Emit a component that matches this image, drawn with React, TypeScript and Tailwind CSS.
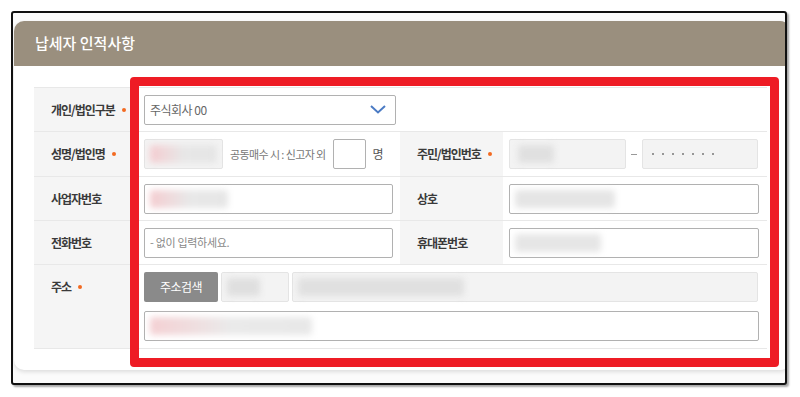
import { ReactNode } from 'react'

const font = { fontFamily: '"Noto Sans CJK KR", "Noto Sans", sans-serif' }

function Label({ children, required, top }: { children: ReactNode; required?: boolean; top?: boolean }) {
  return (
    <div className={`flex bg-[#f5f5f5] pl-[17px] ${top ? 'items-start pt-[13px]' : 'items-center'}`}>
      <span className="inline-flex items-center text-[12px] font-semibold tracking-[-1px] text-[#3a3a3a]">
        {children}
        {required && <span className="ml-[7px] h-[4px] w-[4px] rounded-full bg-[#f26a21]" />}
      </span>
    </div>
  )
}

function Blur({ className }: { className: string }) {
  return <div className={`h-[18px] rounded-[3px] blur-[3px] ${className}`} />
}

function TextBox({ className, children }: { className: string; children?: ReactNode }) {
  return (
    <div className={`flex h-[30px] items-center rounded-[2px] border border-[#b1b1b1] bg-white px-[5px] ${className}`}>
      {children}
    </div>
  )
}

function Disabled({ className, children }: { className: string; children?: ReactNode }) {
  return (
    <div className={`flex h-[30px] items-center rounded-[2px] border border-[#e4e4e4] bg-[#f3f3f3] px-[5px] ${className}`}>
      {children}
    </div>
  )
}

export default function App() {
  return (
    <div className="relative h-[397px] w-[800px] overflow-hidden bg-white pl-[11px] pt-[11px]" style={font}>
      <div className="h-[374px] w-[776px] overflow-hidden rounded-[3px] border-2 border-[#111] bg-[#fbfbfb] pl-px pt-[8px] shadow-[2px_2px_2px_rgba(0,0,0,0.35)]">
        <div className="h-[349px] w-[776px] rounded-[10px] bg-white shadow-[0_2px_4px_rgba(0,0,0,0.12)]">
          <div className="flex h-[45px] items-center rounded-t-[10px] bg-[#9a8f7e] pl-[21px] text-[15px] font-medium text-white">
            납세자 인적사항
          </div>

          <div className="pl-[20px] pt-[21px]">
            <div className="grid w-[733px] grid-cols-[100px_266px_103px_264px] border-t border-[#e8e8e8]">
              {/* row 1 */}
              <div className="col-span-4 grid h-[44px] grid-cols-[100px_1fr] border-b border-[#e8e8e8]">
                <Label required>개인/법인구분</Label>
                <div className="flex items-center pl-[10px]">
                  <div className="flex h-[30px] w-[252px] items-center justify-between rounded-[2px] border border-[#b1b1b1] bg-white pl-[5px] pr-[9px]">
                    <span className="text-[12px] tracking-[-0.5px] text-[#666]">주식회사 00</span>
                    <svg width="16" height="9" viewBox="0 0 16 9" fill="none">
                      <polyline points="1,1 8,7.5 15,1" stroke="#4b7bc4" strokeWidth="2" />
                    </svg>
                  </div>
                </div>
              </div>

              {/* row 2 */}
              <div className="col-span-4 grid h-[45px] grid-cols-[100px_266px_103px_264px] border-b border-[#e8e8e8]">
                <Label required>성명/법인명</Label>
                <div className="flex items-center gap-[7px] pl-[10px]">
                  <Disabled className="w-[79px]">
                    <Blur className="w-[72px] bg-gradient-to-r from-[#f4ccd0] via-[#e7e7e7] to-[#e5e5e5]" />
                  </Disabled>
                  <span className="text-[11px] tracking-[-0.6px] text-[#777]">공동매수 시 : 신고자 외</span>
                  <TextBox className="w-[33px]" />
                  <span className="text-[12px] text-[#555]">명</span>
                </div>
                <Label required>주민/법인번호</Label>
                <div className="flex items-center pl-[6px]">
                  <Disabled className="w-[117px]">
                    <Blur className="ml-[3px] w-[36px] bg-[#e0e0e0]" />
                  </Disabled>
                  <span className="mx-[5px] h-px w-[6px] bg-[#999]" />
                  <Disabled className="w-[116px] pl-[9px]">
                    <div className="flex gap-[8px]">
                      {[0, 1, 2, 3, 4, 5, 6].map((i) => (
                        <span key={i} className="h-[2px] w-[2px] rounded-full bg-[#777]" />
                      ))}
                    </div>
                  </Disabled>
                </div>
              </div>

              {/* row 3 */}
              <div className="col-span-4 grid h-[44px] grid-cols-[100px_266px_103px_264px] border-b border-[#e8e8e8]">
                <Label>사업자번호</Label>
                <div className="flex items-center pl-[10px]">
                  <TextBox className="w-[249px]">
                    <Blur className="w-[78px] bg-gradient-to-r from-[#f4ccd0] via-[#e8e8e8] to-[#e6e6e6]" />
                  </TextBox>
                </div>
                <Label>상호</Label>
                <div className="flex items-center pl-[6px]">
                  <TextBox className="w-[250px]">
                    <Blur className="w-[100px] bg-[#e5e5e5]" />
                  </TextBox>
                </div>
              </div>

              {/* row 4 */}
              <div className="col-span-4 grid h-[44px] grid-cols-[100px_266px_103px_264px] border-b border-[#e8e8e8]">
                <Label>전화번호</Label>
                <div className="flex items-center pl-[10px]">
                  <TextBox className="w-[249px]">
                    <span className="text-[11px] tracking-[-0.3px] text-[#888]">- 없이 입력하세요.</span>
                  </TextBox>
                </div>
                <Label>휴대폰번호</Label>
                <div className="flex items-center pl-[6px]">
                  <TextBox className="w-[250px]">
                    <Blur className="w-[86px] bg-[#e6e6e6]" />
                  </TextBox>
                </div>
              </div>

              {/* row 5 */}
              <div className="col-span-4 grid h-[84px] grid-cols-[100px_1fr] border-b border-[#e8e8e8]">
                <Label required top>
                  주소
                </Label>
                <div className="flex flex-col gap-[9px] pl-[10px] pt-[7px]">
                  <div className="flex gap-[3px]">
                    <div className="flex h-[30px] w-[74px] items-center justify-center rounded-[2px] bg-[#8a8a8a] text-[12px] tracking-[-0.5px] text-white">
                      주소검색
                    </div>
                    <Disabled className="w-[68px] pl-[5px]">
                      <Blur className="w-[33px] bg-[#dfdfdf]" />
                    </Disabled>
                    <Disabled className="w-[466px]">
                      <Blur className="w-[166px] bg-[#e0e0e0]" />
                    </Disabled>
                  </div>
                  <TextBox className="w-[615px]">
                    <Blur className="w-[162px] bg-gradient-to-r from-[#f4d0d3] via-[#eaeaea] to-[#e8e8e8]" />
                  </TextBox>
                </div>
              </div>
            </div>
          </div>
        </div>
      </div>

      {/* red highlight overlay */}
      <div className="absolute left-[130px] top-[77px] h-[290px] w-[649px] rounded-[4px] border-[9px] border-[#ee1c25]" />
    </div>
  )
}
